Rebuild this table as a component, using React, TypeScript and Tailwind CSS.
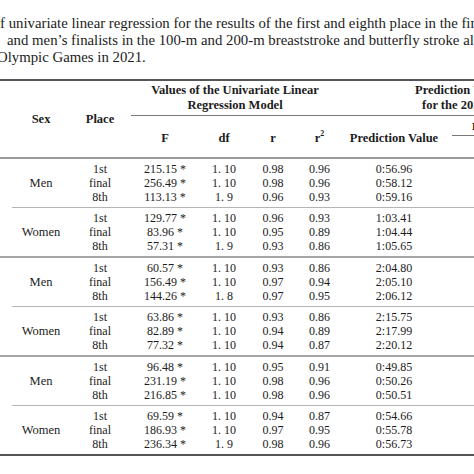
import React from "react";

type Row = { place: string; f: string; df: string; r: string; r2: string; pred: string };
type Group = { sex: string; rows: Row[] };

const serif = { fontFamily: '"Liberation Serif", "Times New Roman", serif' };

const blocks: Group[][] = [
  [
    {
      sex: "Men",
      rows: [
        { place: "1st", f: "215.15 *", df: "1. 10", r: "0.98", r2: "0.96", pred: "0:56.96" },
        { place: "final", f: "256.49 *", df: "1. 10", r: "0.98", r2: "0.96", pred: "0:58.12" },
        { place: "8th", f: "113.13 *", df: "1. 9", r: "0.96", r2: "0.93", pred: "0:59.16" },
      ],
    },
    {
      sex: "Women",
      rows: [
        { place: "1st", f: "129.77 *", df: "1. 10", r: "0.96", r2: "0.93", pred: "1:03.41" },
        { place: "final", f: "83.96 *", df: "1. 10", r: "0.95", r2: "0.89", pred: "1:04.44" },
        { place: "8th", f: "57.31 *", df: "1. 9", r: "0.93", r2: "0.86", pred: "1:05.65" },
      ],
    },
  ],
  [
    {
      sex: "Men",
      rows: [
        { place: "1st", f: "60.57 *", df: "1. 10", r: "0.93", r2: "0.86", pred: "2:04.80" },
        { place: "final", f: "156.49 *", df: "1. 10", r: "0.97", r2: "0.94", pred: "2:05.10" },
        { place: "8th", f: "144.26 *", df: "1. 8", r: "0.97", r2: "0.95", pred: "2:06.12" },
      ],
    },
    {
      sex: "Women",
      rows: [
        { place: "1st", f: "63.86 *", df: "1. 10", r: "0.93", r2: "0.86", pred: "2:15.75" },
        { place: "final", f: "82.89 *", df: "1. 10", r: "0.94", r2: "0.89", pred: "2:17.99" },
        { place: "8th", f: "77.32 *", df: "1. 10", r: "0.94", r2: "0.87", pred: "2:20.12" },
      ],
    },
  ],
  [
    {
      sex: "Men",
      rows: [
        { place: "1st", f: "96.48 *", df: "1. 10", r: "0.95", r2: "0.91", pred: "0:49.85" },
        { place: "final", f: "231.19 *", df: "1. 10", r: "0.98", r2: "0.96", pred: "0:50.26" },
        { place: "8th", f: "216.85 *", df: "1. 10", r: "0.98", r2: "0.96", pred: "0:50.51" },
      ],
    },
    {
      sex: "Women",
      rows: [
        { place: "1st", f: "69.59 *", df: "1. 10", r: "0.94", r2: "0.87", pred: "0:54.66" },
        { place: "final", f: "186.93 *", df: "1. 10", r: "0.97", r2: "0.95", pred: "0:55.78" },
        { place: "8th", f: "236.34 *", df: "1. 9", r: "0.98", r2: "0.96", pred: "0:56.73" },
      ],
    },
  ],
];

const cols = "grid grid-cols-[82px_49px_68px_50px_48px_42px_110px_1fr]";

function GroupRows({ group }: { group: Group }) {
  return (
    <div className={`${cols} py-[3px]`}>
      <div className="row-span-3 flex items-center justify-center text-[12.5px]">{group.sex}</div>
      {group.rows.map((row) => (
        <React.Fragment key={row.place}>
          <div className="h-[14px] pr-[13px] text-center leading-[14px]">{row.place}</div>
          <div className="h-[14px] text-center leading-[14px]">{row.f}</div>
          <div className="h-[14px] text-center leading-[14px]">{row.df}</div>
          <div className="h-[14px] text-center leading-[14px]">{row.r}</div>
          <div className="h-[14px] pl-[3px] text-center leading-[14px]">{row.r2}</div>
          <div className="h-[14px] text-center leading-[14px]">{row.pred}</div>
          <div className="h-[14px]" />
        </React.Fragment>
      ))}
    </div>
  );
}

export default function App() {
  return (
    <div className="h-[474px] w-[474px] overflow-hidden bg-white text-[#1c1c1c]" style={serif}>
      <div className="whitespace-nowrap pt-[15px] text-[14.8px] leading-[17px]">
        <div>f univariate linear regression for the results of the first and eighth place in the final of women’s</div>
        <div className="pl-[7px]">and men’s finalists in the 100-m and 200-m breaststroke and butterfly stroke along with</div>
        <div className="ml-[-3px]">Olympic Games in 2021.</div>
      </div>

      <div className="mt-[13px] w-[640px] text-[12px]">
        <div className="h-[2px] bg-[#555]" />

        <div className={`${cols} grid-rows-[35px_41px] text-[12.5px] font-bold`}>
          <div className="row-span-2 flex items-center justify-center pt-[1px]">Sex</div>
          <div className="row-span-2 flex items-center justify-center pr-[13px] pt-[1px]">Place</div>
          <div className="col-span-4 flex flex-col items-center justify-center border-b border-[#777] leading-[15px]">
            <div>Values of the Univariate Linear</div>
            <div>Regression Model</div>
          </div>
          <div className="col-span-2 flex flex-col justify-center border-b border-[#777] leading-[15px]">
            <div className="pl-[76px]">Prediction Value</div>
            <div className="pl-[83px]">for the 2024 Olympics</div>
          </div>
          <div className="flex items-center justify-center pt-[3px]">F</div>
          <div className="flex items-center justify-center pt-[3px]">df</div>
          <div className="flex items-center justify-center pt-[3px]">r</div>
          <div className="flex items-center justify-center pl-[3px] pt-[3px]">
            r<sup className="text-[8px]">2</sup>
          </div>
          <div className="flex items-center justify-center pt-[3px]">Prediction Value</div>
          <div className="pl-[3px]">
            <div className="h-[20px] border-b border-[#777] pl-[20px] pt-[4px] text-[11px] leading-[12px]">Difference</div>
          </div>
        </div>

        <div className="h-[2px] bg-[#999]" />

        {blocks.map((block, bi) => (
          <div key={bi}>
            <GroupRows group={block[0]} />
            <div className="ml-[12px] h-px bg-[#b5b5b5]" />
            <GroupRows group={block[1]} />
            <div className={bi === blocks.length - 1 ? "h-[2px] bg-[#555]" : "h-[2px] bg-[#a5a5a5]"} />
          </div>
        ))}
      </div>
    </div>
  );
}
